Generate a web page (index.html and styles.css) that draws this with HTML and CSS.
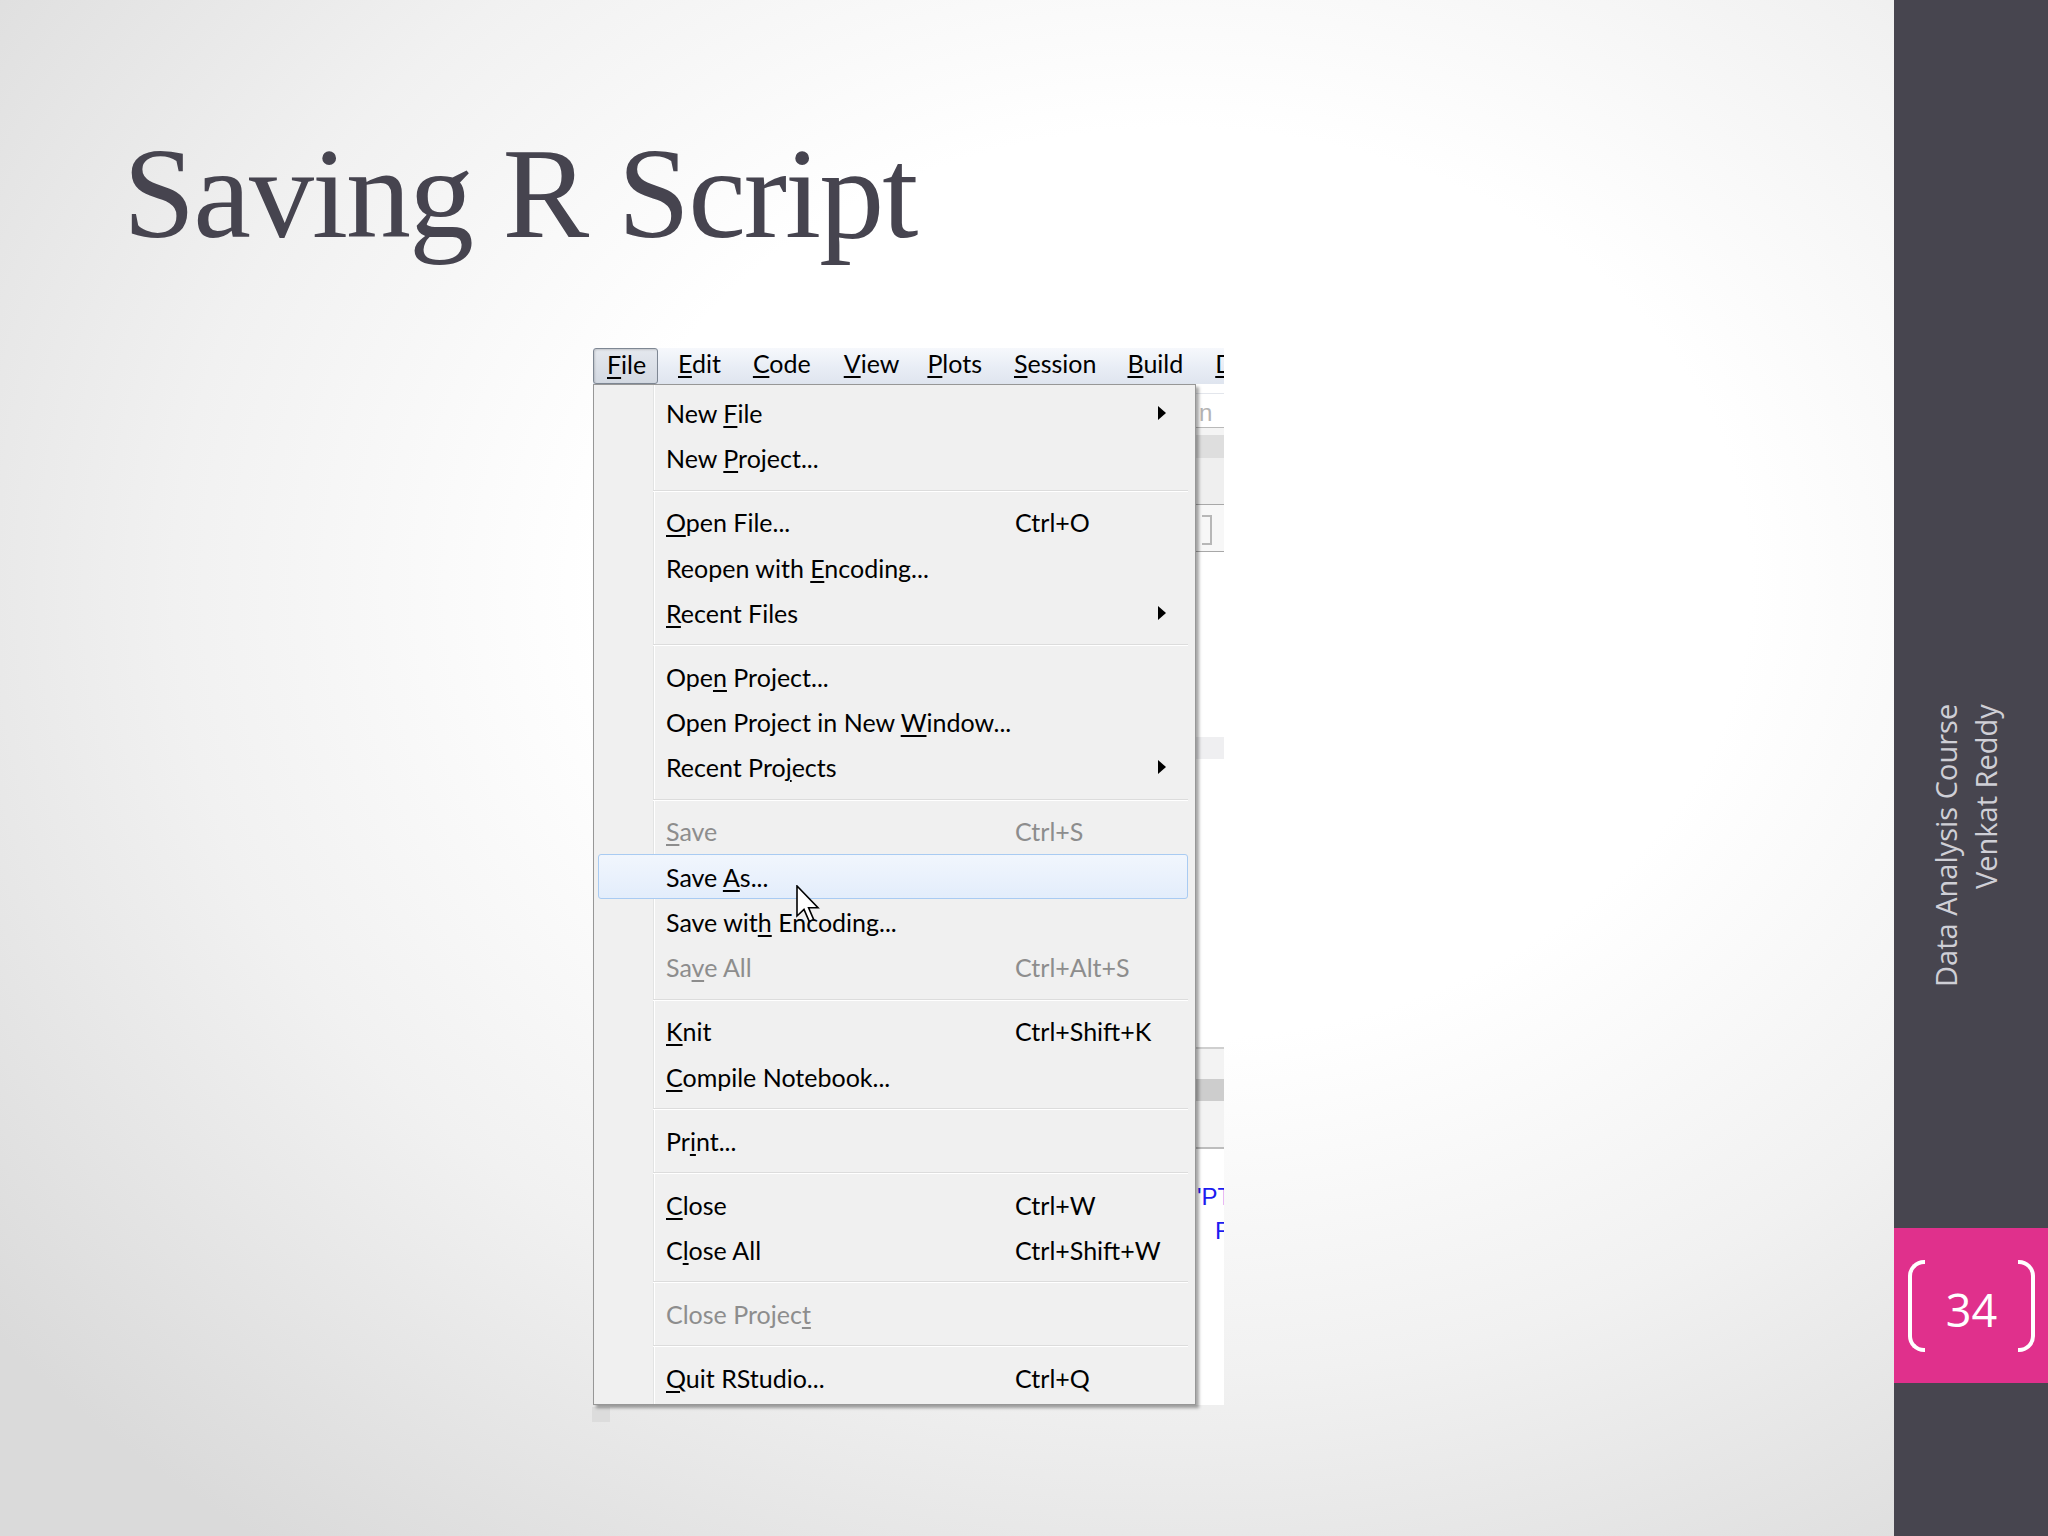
FILE: index.html
```html
<!DOCTYPE html>
<html lang="en">
<head>
<meta charset="utf-8">
<title>Saving R Script</title>
<link rel="stylesheet" href="styles.css">
</head>
<body>
<div class="slide">
  <main class="content">
    <h1 class="title">Saving R Script</h1>
    <div class="shot">
      <div class="menubar">
        <span class="mb-item mb-active"><u>F</u>ile</span>
        <span class="mb-item mb-edit"><u>E</u>dit</span>
        <span class="mb-item mb-code"><u>C</u>ode</span>
        <span class="mb-item mb-view"><u>V</u>iew</span>
        <span class="mb-item mb-plots"><u>P</u>lots</span>
        <span class="mb-item mb-session"><u>S</u>ession</span>
        <span class="mb-item mb-build"><u>B</u>uild</span>
        <span class="mb-item mb-debug"><u>D</u>ebug</span>
      </div>
      <div class="shot-body">
        <div class="dropdown">
          <div class="item"><span class="lbl">New <u>F</u>ile</span><span class="sc"></span><span class="arrow"></span></div>
          <div class="item"><span class="lbl">New <u>P</u>roject...</span><span class="sc"></span><span></span></div>
          <div class="sep"></div>
          <div class="item"><span class="lbl"><u>O</u>pen File...</span><span class="sc">Ctrl+O</span><span></span></div>
          <div class="item"><span class="lbl">Reopen with <u>E</u>ncoding...</span><span class="sc"></span><span></span></div>
          <div class="item"><span class="lbl"><u>R</u>ecent Files</span><span class="sc"></span><span class="arrow"></span></div>
          <div class="sep"></div>
          <div class="item"><span class="lbl">Ope<u>n</u> Project...</span><span class="sc"></span><span></span></div>
          <div class="item"><span class="lbl">Open Project in New <u>W</u>indow...</span><span class="sc"></span><span></span></div>
          <div class="item"><span class="lbl">Recent Pro<u>j</u>ects</span><span class="sc"></span><span class="arrow"></span></div>
          <div class="sep"></div>
          <div class="item disabled"><span class="lbl"><u>S</u>ave</span><span class="sc">Ctrl+S</span><span></span></div>
          <div class="item hover"><span class="lbl">Save <u>A</u>s...</span><span class="sc"></span><span></span>
            <svg class="cursor" width="26" height="38" viewBox="0 0 13 19" aria-hidden="true"><path d="M0.5 0.5 L0.5 15.5 L4 12.2 L6.6 18.2 L8.8 17.2 L6.3 11.4 L11 11.4 Z" fill="#fff" stroke="#000" stroke-width="0.8" stroke-linejoin="miter"/></svg>
          </div>
          <div class="item"><span class="lbl">Save wit<u>h</u> Encoding...</span><span class="sc"></span><span></span></div>
          <div class="item disabled"><span class="lbl">Sa<u>v</u>e All</span><span class="sc">Ctrl+Alt+S</span><span></span></div>
          <div class="sep"></div>
          <div class="item"><span class="lbl"><u>K</u>nit</span><span class="sc">Ctrl+Shift+K</span><span></span></div>
          <div class="item"><span class="lbl"><u>C</u>ompile Notebook...</span><span class="sc"></span><span></span></div>
          <div class="sep"></div>
          <div class="item"><span class="lbl">Pr<u>i</u>nt...</span><span class="sc"></span><span></span></div>
          <div class="sep"></div>
          <div class="item"><span class="lbl"><u>C</u>lose</span><span class="sc">Ctrl+W</span><span></span></div>
          <div class="item"><span class="lbl">C<u>l</u>ose All</span><span class="sc">Ctrl+Shift+W</span><span></span></div>
          <div class="sep"></div>
          <div class="item disabled"><span class="lbl">Close Projec<u>t</u></span><span class="sc"></span><span></span></div>
          <div class="sep"></div>
          <div class="item"><span class="lbl"><u>Q</u>uit RStudio...</span><span class="sc">Ctrl+Q</span><span></span></div>
        </div>
        <div class="strip">
          <div class="st-search"><span>n</span></div>
          <div class="st-gap1"></div>
          <div class="st-band-dark"></div>
          <div class="st-band-light"></div>
          <div class="st-toolbar"><span class="st-icon"></span></div>
          <div class="st-white1"></div>
          <div class="st-band-faint"></div>
          <div class="st-white2"></div>
          <div class="st-panel">
            <div class="st-p1"></div>
            <div class="st-p2"></div>
            <div class="st-p3"></div>
          </div>
          <div class="st-white3"></div>
          <div class="st-code">
            <div class="st-c1">'PT</div>
            <div class="st-c2">F</div>
          </div>
        </div>
      </div>
      <div class="stub"></div>
    </div>
  </main>
  <aside class="sidebar">
    <div class="footer-text">
      <div>Data Analysis Course</div>
      <div>Venkat Reddy</div>
    </div>
    <div class="page-box">
      <span class="br br-left"></span>
      <span class="page-num">34</span>
      <span class="br br-right"></span>
    </div>
  </aside>
</div>
</body>
</html>
```

FILE: styles.css
```css
html, body {
  margin: 0;
  padding: 0;
}

body {
  width: 2048px;
  height: 1536px;
  overflow: hidden;
}

.slide {
  display: flex;
  width: 2048px;
  height: 1536px;
}

.content {
  flex: 1;
  position: relative;
  background: radial-gradient(ellipse 80% 78% at 62% 38%, #ffffff 38%, #f1f1f1 66%, #dadada 100%);
}

.title {
  margin: 128px 0 0 123px;
  font-family: "Liberation Serif", "Times New Roman", serif;
  font-weight: 400;
  font-size: 130px;
  line-height: 130px;
  letter-spacing: -2px;
  color: #46444f;
}

/* ---------- screenshot of the RStudio File menu ---------- */
.shot {
  margin: 90px 0 0 593px;
  width: 631px;
  font-family: "Lato", "Open Sans", sans-serif;
  font-size: 25px;
  color: #000;
}

.shot u {
  text-decoration: underline;
  text-underline-offset: 3px;
  text-decoration-thickness: 2px;
}

.menubar {
  height: 36px;
  display: flex;
  align-items: flex-start;
  background: linear-gradient(#f6f8fc, #e8edf5 55%, #dfe5ef);
  overflow: hidden;
  white-space: nowrap;
}

.mb-item {
  flex: none;
  line-height: 31px;
}

.mb-active {
  box-sizing: border-box;
  width: 65px;
  height: 36px;
  padding-left: 13px;
  border: 1px solid #7e8793;
  border-radius: 3px;
  background: linear-gradient(#e4e8ee, #d3d9e2);
  box-shadow: inset 1px 1px 2px rgba(0, 0, 0, 0.15);
}

.mb-edit { margin-left: 20px; }
.mb-code { margin-left: 32px; }
.mb-view { margin-left: 33px; }
.mb-plots { margin-left: 28px; }
.mb-session { margin-left: 32px; }
.mb-build { margin-left: 31px; }
.mb-debug { margin-left: 32px; }

.shot-body {
  display: flex;
  align-items: flex-start;
}

.dropdown {
  position: relative;
  z-index: 2;
  box-sizing: border-box;
  width: 603px;
  padding: 5.3px 0 3.4px;
  border: 1px solid #979797;
  background: linear-gradient(to right, #f0f0f0 59px, #e2e3e3 59px, #e2e3e3 60px, #ffffff 60px, #ffffff 61px, #f0f0f0 61px);
  box-shadow: 3px 3px 3px rgba(0, 0, 0, 0.35);
}

.item {
  position: relative;
  box-sizing: border-box;
  height: 45.3px;
  margin: 0 7px 0 4px;
  padding-left: 67px;
  border: 1px solid transparent;
  border-radius: 3px;
  display: grid;
  grid-template-columns: 349px 143px 9px;
  align-items: center;
  white-space: nowrap;
}

.item.hover {
  border-color: #a9cbf2;
  background: linear-gradient(#f1f6fd, #e3edfb);
}

.item.disabled {
  color: #8d8d8d;
}

.arrow {
  width: 0;
  height: 0;
  border-top: 7px solid transparent;
  border-bottom: 7px solid transparent;
  border-left: 8px solid #000;
}

.cursor {
  position: absolute;
  left: 197px;
  top: 30px;
  z-index: 3;
}

.sep {
  box-sizing: border-box;
  height: 18.7px;
  margin: 0 7px 0 59px;
  padding-top: 9px;
}

.sep::before {
  content: "";
  display: block;
  height: 1px;
  background: #dcdcdc;
  border-bottom: 1px solid #ffffff;
}

/* strip of the RStudio window visible to the right of the menu */
.strip {
  flex: none;
  width: 28px;
  height: 1021px;
  background: #ffffff;
  display: flex;
  flex-direction: column;
  overflow: hidden;
  font-family: "Liberation Sans", Arial, sans-serif;
}

.st-search {
  box-sizing: border-box;
  height: 35px;
  margin-top: 9px;
  border-top: 1px solid #e3e6ec;
  border-bottom: 1px solid #b9b9b9;
  color: #b4b4b4;
  font-size: 24px;
  line-height: 38px;
  padding-left: 3px;
  overflow: hidden;
}

.st-gap1 { height: 7px; background: #f4f4f4; }
.st-band-dark { height: 23px; background: #dedede; }
.st-band-light { height: 46px; background: #efefef; border-bottom: 1px solid #a8a8a8; }

.st-toolbar {
  height: 46px;
  background: #f7f7f7;
  border-bottom: 1px solid #a8a8a8;
}

.st-icon {
  display: block;
  width: 8px;
  height: 26px;
  margin: 10px 0 0 6px;
  border: 2px solid #b7b7b7;
  border-left: none;
}

.st-white1 { height: 185px; }
.st-band-faint { height: 22px; background: #efeff1; }
.st-white2 { height: 288px; }

.st-panel {
  border-top: 2px solid #cfcfcf;
  border-bottom: 2px solid #bdbdbd;
}

.st-p1 { height: 30px; background: #f3f3f3; }
.st-p2 { height: 22px; background: #cdcdcd; }
.st-p3 { height: 46px; background: #f3f3f3; }

.st-white3 { height: 31px; }

.st-code {
  color: #1c1cf0;
  font-size: 24px;
  line-height: 34px;
  white-space: nowrap;
}

.st-c1 { margin-left: 1px; }
.st-c2 { margin-left: 19px; }

.stub {
  width: 18px;
  height: 15px;
  margin-top: 2px;
  margin-left: -1px;
  background: #dcdcdc;
}

/* ---------- right sidebar ---------- */
.sidebar {
  flex: none;
  width: 154px;
  background: #47454f;
  display: flex;
  flex-direction: column;
  align-items: center;
}

.footer-text {
  margin: 704px 10px 0 0;
  height: 300px;
  writing-mode: vertical-rl;
  transform: rotate(180deg);
  text-align: right;
  font-family: "Open Sans", "Noto Sans", sans-serif;
  font-size: 29px;
  line-height: 40px;
  color: #cfcfd6;
  white-space: nowrap;
}

.page-box {
  margin-top: 224px;
  align-self: stretch;
  height: 155px;
  background: #e0308c;
  display: flex;
  align-items: center;
  justify-content: space-between;
  padding: 0 13px 0 14px;
}

.br {
  box-sizing: border-box;
  width: 17px;
  height: 92px;
  border: 4px solid #ffffff;
}

.br-left {
  border-right: none;
  border-radius: 16px 0 0 16px;
}

.br-right {
  border-left: none;
  border-radius: 0 16px 16px 0;
}

.page-num {
  font-family: "Open Sans", "Noto Sans", sans-serif;
  font-size: 45px;
  line-height: 1;
  color: #ffffff;
  padding-top: 8px;
}
```
